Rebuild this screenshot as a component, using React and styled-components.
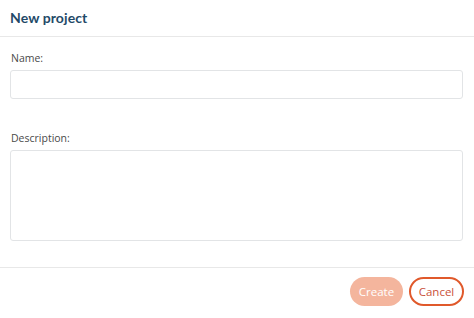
import React from "react";
import styled, { createGlobalStyle } from "styled-components";

const Global = createGlobalStyle`
  html, body { margin: 0; padding: 0; background: #fff; }
  body { font-family: "Open Sans", "Noto Sans", sans-serif; }
  * { box-sizing: border-box; }
`;

const Dialog = styled.div`
  width: 474px;
  height: 318px;
  display: flex;
  flex-direction: column;
  background: #fff;
`;

const Header = styled.div`
  height: 37px;
  border-bottom: 1px solid #e8e8e8;
  display: flex;
  align-items: center;
  padding: 0 10px 2px;
`;

const Title = styled.h1`
  margin: 0;
  font-family: "Lato", "Open Sans", sans-serif;
  font-weight: 700;
  font-size: 14px;
  color: #1f4a68;
  letter-spacing: 0.1px;
`;

const Body = styled.div`
  flex: 0 0 auto;
  height: 231px;
  border-bottom: 1px solid #e8e8e8;
  padding: 13px 10px 0 11px;
  display: flex;
  flex-direction: column;
`;

const Label = styled.label`
  font-size: 10.5px;
  color: #4a4a4a;
  line-height: 16px;
  margin-bottom: 4px;
  display: block;
`;

const Field = styled.div`
  display: flex;
  flex-direction: column;
  margin-bottom: ${(p) => p.$mb || 0}px;
`;

const Input = styled.input`
  width: 453px;
  height: 29px;
  margin-left: -1px;
  border: 1.5px solid #e2e4e6;
  border-radius: 3px;
  background: #fff;
  outline: none;
`;

const TextArea = styled.textarea`
  width: 453px;
  height: 91px;
  margin-left: -1px;
  border: 1.5px solid #e2e4e6;
  border-radius: 3px;
  background: #fff;
  resize: none;
  outline: none;
`;

const Footer = styled.div`
  flex: 1;
  display: flex;
  justify-content: flex-end;
  align-items: center;
  gap: 6px;
  padding: 0 10px 4px 0;
`;

const Button = styled.button`
  height: 29px;
  width: ${(p) => p.$w}px;
  border-radius: 15px;
  font-family: "Open Sans", sans-serif;
  font-size: 11.5px;
  cursor: pointer;
  padding: 0;
  background: ${(p) => (p.$primary ? "#f4b59d" : "#fff")};
  color: ${(p) => (p.$primary ? "#fff" : "#c9513a")};
  border: ${(p) => (p.$primary ? "none" : "2px solid #e0592b")};
`;

export default function App() {
  return (
    <>
      <Global />
      <Dialog>
        <Header>
          <Title>New project</Title>
        </Header>
        <Body>
          <Field $mb={31}>
            <Label>Name:</Label>
            <Input />
          </Field>
          <Field>
            <Label>Description:</Label>
            <TextArea />
          </Field>
        </Body>
        <Footer>
          <Button $primary $w={53}>Create</Button>
          <Button $w={55}>Cancel</Button>
        </Footer>
      </Dialog>
    </>
  );
}
